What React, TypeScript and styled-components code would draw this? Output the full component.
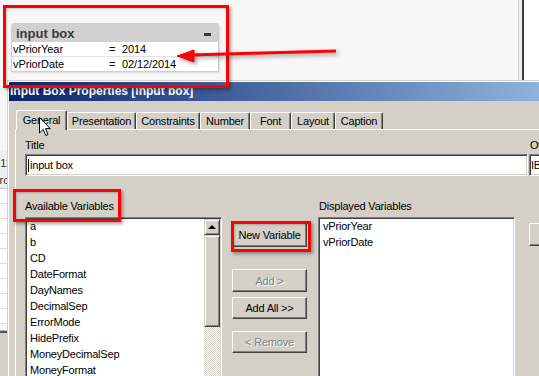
import React from 'react'
import styled, { createGlobalStyle } from 'styled-components'

const GlobalStyle = createGlobalStyle`
  html, body {
    margin: 0;
    padding: 0;
    background: #f7f7f7;
  }
  body {
    font-family: 'Liberation Sans', Arial, sans-serif;
  }
`

const availableVars = [
  'a',
  'b',
  'CD',
  'DateFormat',
  'DayNames',
  'DecimalSep',
  'ErrorMode',
  'HidePrefix',
  'MoneyDecimalSep',
  'MoneyFormat',
  'MoneyThousandSep',
  'MonthNames',
]
const displayedVars = ['vPriorYear', 'vPriorDate']

const tabs = [
  { label: 'General', w: 51 },
  { label: 'Presentation', w: 69 },
  { label: 'Constraints', w: 64 },
  { label: 'Number', w: 50 },
  { label: 'Font', w: 41 },
  { label: 'Layout', w: 44 },
  { label: 'Caption', w: 48 },
]

const App = () => {
  return (
    <>
      <GlobalStyle />
      <Screen>
        <Canvas>
          <InputBoxObject>
            <ObjHeader>
              input box
              <MinButton />
            </ObjHeader>
            <ObjRow>
              <span>vPriorYear</span>
              <span>=</span>
              <span>2014</span>
            </ObjRow>
            <ObjRow>
              <span>vPriorDate</span>
              <span>=</span>
              <span>02/12/2014</span>
            </ObjRow>
          </InputBoxObject>

          <SheetTable>
            <TableHead>
              <span>2011</span>
              <span>Source</span>
            </TableHead>
            {Array.from({ length: 9 }).map((_, i) => (
              <TableRow key={i} />
            ))}
          </SheetTable>
          <SheetFooter />
        </Canvas>
        <Gutter />
        <EdgeLine />
        <Blank />

        <Window>
          <TitleBar>Input Box Properties [input box]</TitleBar>
          <Body>
            <TabRow>
              {tabs.map((t, i) => (
                <Tab key={t.label} $w={t.w} $active={i === 0}>
                  {t.label}
                </Tab>
              ))}
            </TabRow>
            <Pane>
              <FieldRow>
                <Field $w={503}>
                  <Label>Title</Label>
                  <TextInput>
                    <Caret />
                    input box
                  </TextInput>
                </Field>
                <Field $w={120}>
                  <Label $indent={1}>Object ID</Label>
                  <TextInput>IB01</TextInput>
                </Field>
              </FieldRow>

              <Columns>
                <ListColumn>
                  <Label>Available Variables</Label>
                  <ListBox>
                    <ListItems>
                      {availableVars.map((v) => (
                        <Item key={v}>{v}</Item>
                      ))}
                    </ListItems>
                    <ScrollBar>
                      <ScrollButton>
                        <UpArrow />
                      </ScrollButton>
                      <ScrollThumb />
                      <ScrollTrack />
                    </ScrollBar>
                  </ListBox>
                </ListColumn>

                <ButtonColumn>
                  <Button $h={25}>New Variable</Button>
                  <Button $h={23} $mt={22} disabled>
                    Add &gt;
                  </Button>
                  <Button $h={22} $mt={5}>
                    Add All &gt;&gt;
                  </Button>
                  <Button $h={22} $mt={12} disabled>
                    &lt; Remove
                  </Button>
                </ButtonColumn>

                <ListColumn $ml={11}>
                  <Label $indent={1}>Displayed Variables</Label>
                  <ListBox>
                    <ListItems>
                      {displayedVars.map((v) => (
                        <Item key={v}>{v}</Item>
                      ))}
                    </ListItems>
                  </ListBox>
                </ListColumn>

                <SideColumn>
                  <Button $h={23} $w={80}>
                    Up
                  </Button>
                </SideColumn>
              </Columns>
            </Pane>
          </Body>
        </Window>

        <Callout style={{ left: 3, top: 5, width: 226, height: 83 }} />
        <Callout style={{ left: 13, top: 189, width: 108, height: 33 }} />
        <Callout style={{ left: 231, top: 221, width: 80, height: 31 }} />

        <Overlay viewBox="0 0 539 376">
          <g fill="#ff0000" stroke="#ff0000">
            <line x1="336" y1="51" x2="190" y2="55" strokeWidth="3" />
            <polygon points="177,56 194,50 194,62" strokeWidth="1" />
          </g>
        </Overlay>

        <Cursor viewBox="0 0 12 20">
          <path
            d="M0.5 0.5 L0.5 16 L4.2 12.4 L6.8 18.5 L9 17.6 L6.5 11.6 L11.3 11.6 Z"
            fill="#fff"
            stroke="#000"
            strokeWidth="1"
          />
        </Cursor>
      </Screen>
    </>
  )
}

export default App

interface BoxProps {
  $w?: number
  $h?: number
  $mt?: number
  $ml?: number
  $indent?: number
  $active?: boolean
}

const Screen = styled.div`
  position: relative;
  display: flex;
  width: 539px;
  height: 376px;
  overflow: hidden;
`
const Canvas = styled.div`
  position: relative;
  flex: none;
  width: 518px;
  background: #f7f7f7;
  border-right: 1px solid #d6d6d6;
`
const Gutter = styled.div`
  width: 3px;
  background: #efefef;
`
const EdgeLine = styled.div`
  width: 2px;
  background: #3a3a3a;
`
const Blank = styled.div`
  flex: 1;
  background: #fff;
`

/* QlikView input box object sitting on the sheet */
const InputBoxObject = styled.div`
  position: absolute;
  left: 11px;
  top: 23px;
  width: 206px;
  background: #fff;
  border: 1px solid #cfcfcf;
  border-radius: 3px 3px 0 0;
  box-shadow: 1px 1px 2px rgba(0, 0, 0, 0.12);
`
const ObjHeader = styled.div`
  display: flex;
  align-items: center;
  justify-content: space-between;
  height: 18px;
  padding: 0 7px 0 4px;
  background: #d1d1d1;
  font-size: 13px;
  font-weight: 700;
  color: #3a3a3a;
`
const MinButton = styled.span`
  width: 7px;
  height: 3px;
  margin-top: 3px;
  background: #3a3a3a;
`
const ObjRow = styled.div`
  display: grid;
  grid-template-columns: 96px 13px 1fr;
  align-items: center;
  height: 14px;
  padding-left: 1px;
  font-size: 11px;
  letter-spacing: -0.1px;
  color: #000;
  & + & {
    border-top: 1px solid #e2e2e2;
  }
`

/* another sheet object, mostly hidden behind the dialog */
const SheetTable = styled.div`
  position: absolute;
  left: -40px;
  top: 150px;
  width: 47px;
  background: #fff;
`
const TableHead = styled.div`
  display: flex;
  flex-direction: column;
  height: 39px;
  padding: 5px 0 0 28px;
  box-sizing: border-box;
  background: #efefef;
  border-bottom: 1px solid #c8c8c8;
  font-size: 11px;
  line-height: 17px;
  color: #333;
  white-space: nowrap;
  span:last-child {
    margin-left: -8px;
  }
`
const TableRow = styled.div`
  height: 14px;
  border-bottom: 1px solid #dcdcdc;
`
const SheetFooter = styled.div`
  position: absolute;
  left: -10px;
  top: 330px;
  width: 17px;
  height: 46px;
  background: #d4d0c8;
  border-top: 1px solid #bdbdbd;
  box-shadow: inset 0 10px 0 -8px #555;
`

/* the properties dialog */
const Window = styled.div`
  position: absolute;
  left: 7px;
  top: 80px;
  z-index: 2;
  display: flex;
  flex-direction: column;
  width: 620px;
  height: 320px;
  padding: 2px 0 0 2px;
  box-sizing: border-box;
  background: #d4d0c8;
  box-shadow: inset 1px 1px 0 #d4d0c8, inset 2px 2px 0 #fff;
  font-size: 11px;
  letter-spacing: -0.2px;
  color: #000;
`
const TitleBar = styled.div`
  height: 19px;
  padding-left: 1px;
  background: linear-gradient(90deg, #0a246a 0, #a6caf0 620px);
  color: #fff;
  font-size: 12px;
  font-weight: 700;
  letter-spacing: 0;
  line-height: 19px;
  white-space: nowrap;
`
const Body = styled.div`
  display: flex;
  flex-direction: column;
  flex: 1;
  padding: 9px 0 0 6px;
`
const TabRow = styled.div`
  position: relative;
  z-index: 1;
  display: flex;
  align-items: flex-end;
  height: 19px;
  padding-left: 1px;
`
const Tab = styled.div<BoxProps>`
  display: flex;
  align-items: center;
  justify-content: center;
  box-sizing: border-box;
  width: ${({ $w }) => $w}px;
  height: ${({ $active }) => ($active ? 20 : 17)}px;
  margin-bottom: ${({ $active }) => ($active ? -1 : 0)}px;
  padding-bottom: ${({ $active }) => ($active ? 1 : 0)}px;
  background: #d4d0c8;
  border-top: 1px solid #fff;
  border-left: 1px solid #fff;
  border-right: 1px solid #404040;
  border-radius: 2px 2px 0 0;
  box-shadow: inset -1px 0 0 #808080;
  white-space: nowrap;
`
const Pane = styled.div`
  display: flex;
  flex-direction: column;
  flex: 1;
  padding: 8px 0 0 9px;
  border-top: 1px solid #fff;
  border-left: 1px solid #fff;
`
const FieldRow = styled.div`
  display: flex;
  gap: 1px;
`
const Field = styled.div<BoxProps>`
  display: flex;
  flex-direction: column;
  flex: none;
  gap: 2px;
  width: ${({ $w }) => $w}px;
`
const Label = styled.div<BoxProps>`
  height: 14px;
  padding-left: ${({ $indent }) => $indent ?? 0}px;
  line-height: 14px;
  white-space: nowrap;
`
const TextInput = styled.div`
  display: flex;
  align-items: center;
  height: 22px;
  box-sizing: border-box;
  padding-left: 1px;
  background: #fff;
  border-top: 1px solid #808080;
  border-left: 1px solid #808080;
  border-right: 1px solid #fff;
  border-bottom: 1px solid #fff;
  box-shadow: inset 1px 1px 0 #404040, inset -1px -1px 0 #d4d0c8;
  white-space: nowrap;
`
const Caret = styled.span`
  width: 1px;
  height: 13px;
  margin: 0 1px 0 1px;
  background: #000;
`
const Columns = styled.div`
  display: flex;
  align-items: flex-start;
  margin-top: 23px;
`
const ListColumn = styled.div<BoxProps>`
  display: flex;
  flex-direction: column;
  flex: none;
  gap: 4px;
  width: 197px;
  margin-left: ${({ $ml }) => $ml ?? 0}px;
`
const ListBox = styled.div`
  display: flex;
  height: 200px;
  box-sizing: border-box;
  overflow: hidden;
  background: #fff;
  border-top: 1px solid #808080;
  border-left: 1px solid #808080;
  border-right: 1px solid #fff;
  border-bottom: 1px solid #fff;
  box-shadow: inset 1px 1px 0 #404040, inset -1px -1px 0 #d4d0c8;
`
const ListItems = styled.div`
  flex: 1;
  padding: 0 0 0 4px;
  line-height: 16px;
`
const Item = styled.div`
  height: 16px;
  white-space: nowrap;
`
const ScrollBar = styled.div`
  display: flex;
  flex-direction: column;
  width: 16px;
  margin: 1px 1px 0 0;
`
const Raised = `
  box-sizing: border-box;
  background: #d4d0c8;
  border-top: 1px solid #d4d0c8;
  border-left: 1px solid #d4d0c8;
  border-right: 1px solid #404040;
  border-bottom: 1px solid #404040;
  box-shadow: inset 1px 1px 0 #fff, inset -1px -1px 0 #808080;
`
const ScrollButton = styled.div`
  ${Raised}
  display: flex;
  align-items: center;
  justify-content: center;
  height: 16px;
`
const UpArrow = styled.span`
  width: 0;
  height: 0;
  border-left: 4px solid transparent;
  border-right: 4px solid transparent;
  border-bottom: 4px solid #000;
  margin-top: -1px;
`
const ScrollThumb = styled.div`
  ${Raised}
  height: 92px;
`
const ScrollTrack = styled.div`
  flex: 1;
  background: repeating-conic-gradient(#d4d0c8 0 25%, #fff 0 50%) 0 0 / 2px 2px;
`
const ButtonColumn = styled.div`
  display: flex;
  flex-direction: column;
  flex: none;
  width: 75px;
  margin-left: 10px;
  padding-top: 23px;
`
const Button = styled.button<BoxProps>`
  display: flex;
  align-items: center;
  justify-content: center;
  width: ${({ $w }) => $w ?? 75}px;
  height: ${({ $h }) => $h}px;
  margin: ${({ $mt }) => $mt ?? 0}px 0 0 0;
  padding: 0;
  box-sizing: border-box;
  background: #d4d0c8;
  border-top: 1px solid #fff;
  border-left: 1px solid #fff;
  border-right: 1px solid #404040;
  border-bottom: 1px solid #404040;
  border-radius: 0;
  box-shadow: inset -1px -1px 0 #808080;
  font-family: inherit;
  font-size: 11px;
  letter-spacing: -0.2px;
  color: #000;
  white-space: nowrap;
  &:disabled {
    color: #808080;
    text-shadow: 1px 1px 0 #fff;
  }
`
const SideColumn = styled.div`
  flex: none;
  margin-left: 14px;
  padding-top: 24px;
`

/* screenshot annotations */
const Callout = styled.div`
  position: absolute;
  z-index: 5;
  box-sizing: border-box;
  border: 3px solid #ff0000;
  box-shadow: 2px 2px 3px rgba(0, 0, 0, 0.35), inset 1px 1px 2px rgba(0, 0, 0, 0.2);
  pointer-events: none;
`
const Overlay = styled.svg`
  position: absolute;
  left: 0;
  top: 0;
  z-index: 5;
  width: 539px;
  height: 376px;
  filter: drop-shadow(2px 2px 2px rgba(0, 0, 0, 0.4));
  pointer-events: none;
`
const Cursor = styled.svg`
  position: absolute;
  left: 39px;
  top: 117px;
  z-index: 6;
  width: 12px;
  height: 20px;
`
